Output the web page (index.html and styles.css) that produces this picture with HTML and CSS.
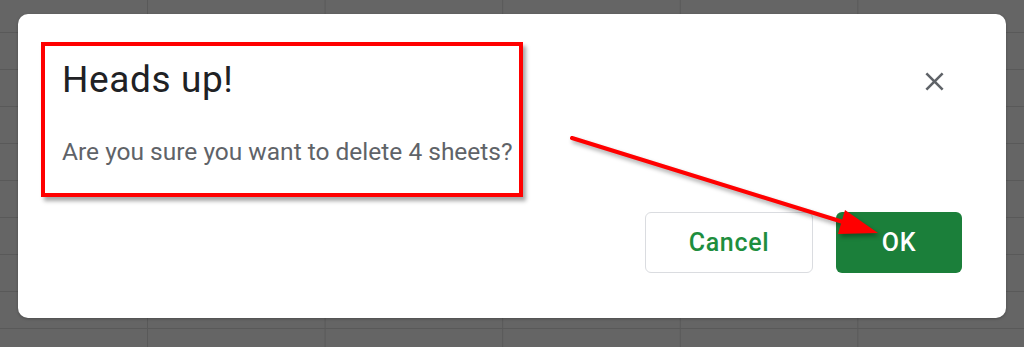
FILE: index.html
```html
<!DOCTYPE html>
<html lang="en">
<head>
<meta charset="utf-8">
<title>Heads up!</title>
<link rel="stylesheet" href="styles.css">
</head>
<body>
<div class="sheet">
  <div class="dialog">
    <div class="dialog-header">
      <div class="highlight">
        <h1 class="title">Heads up!</h1>
        <p class="message">Are you sure you want to delete 4 sheets?</p>
      </div>
      <button class="close" aria-label="Close">
        <svg viewBox="0 0 24 24" width="31" height="31"><path d="M19 6.41L17.59 5 12 10.59 6.41 5 5 6.41 10.59 12 5 17.59 6.41 19 12 13.41 17.59 19 19 17.59 13.41 12z" fill="#5f6368"/></svg>
      </button>
    </div>
    <div class="dialog-footer">
      <button class="btn btn-cancel">Cancel</button>
      <button class="btn btn-ok">OK</button>
    </div>
  </div>
  <svg class="arrow" width="1024" height="347" viewBox="0 0 1024 347">
    <line x1="572" y1="138" x2="843" y2="222" stroke="#ff0000" stroke-width="4" stroke-linecap="round"/>
    <polygon points="878,233 838,234 845,210" fill="#ff0000"/>
  </svg>
</div>
</body>
</html>
```
FILE: styles.css
```css
* { box-sizing: border-box; }
html, body { margin: 0; padding: 0; }
body {
  width: 1024px;
  height: 347px;
  overflow: hidden;
  font-family: Roboto, "Noto Sans", Arial, sans-serif;
  background-color: #656565;
  background-image:
    linear-gradient(to right, #595959 1px, transparent 1px),
    linear-gradient(to bottom, #595959 1px, transparent 1px);
  background-size: 177.6px 37px, 177.6px 37px;
  background-position: 147px 0, 0 32px;
}
.sheet {
  position: relative;
  width: 1024px;
  height: 347px;
  padding: 14px 18px 0 18px;
}
.dialog {
  width: 988px;
  height: 304px;
  background: #fff;
  border-radius: 10px;
  box-shadow: 0 1px 3px rgba(0,0,0,0.25);
  padding: 28px 44px 45px 23px;
  display: flex;
  flex-direction: column;
}
.dialog-header {
  display: flex;
  justify-content: space-between;
  align-items: flex-start;
}
.highlight {
  width: 482px;
  height: 155px;
  border: 4px solid #ff0000;
  padding: 12px 4px 0 17px;
  box-shadow: 3px 4px 4px rgba(0,0,0,0.35);
}
.title {
  margin: 0;
  font-family: Roboto, "Noto Sans", sans-serif;
  font-weight: 400;
  font-size: 37px;
  line-height: 44px;
  color: #202124;
  letter-spacing: 0.6px;
}
.message {
  margin: 35px 0 0 0;
  font-size: 24.5px;
  line-height: 30px;
  color: #5f6368;
  white-space: nowrap;
}
.close {
  margin: 15px 4px 0 0;
  width: 48px;
  height: 48px;
  border: none;
  background: transparent;
  padding: 0;
  display: flex;
  align-items: center;
  justify-content: center;
}
.dialog-footer {
  margin-top: auto;
  display: flex;
  justify-content: flex-end;
  gap: 23px;
}
.btn {
  height: 61px;
  border-radius: 6px;
  font-family: Roboto, "Noto Sans", sans-serif;
  font-weight: 500;
  font-size: 25px;
  letter-spacing: 0.7px;
  padding: 0;
}
.btn-cancel {
  width: 168px;
  background: #fff;
  border: 1px solid #dadce0;
  color: #1e8e3e;
}
.btn-ok {
  width: 126px;
  background: #1b7f3a;
  border: none;
  color: #fff;
}
.arrow {
  position: absolute;
  left: 0;
  top: 0;
  pointer-events: none;
  filter: drop-shadow(2px 3px 2px rgba(0,0,0,0.35));
}
```
